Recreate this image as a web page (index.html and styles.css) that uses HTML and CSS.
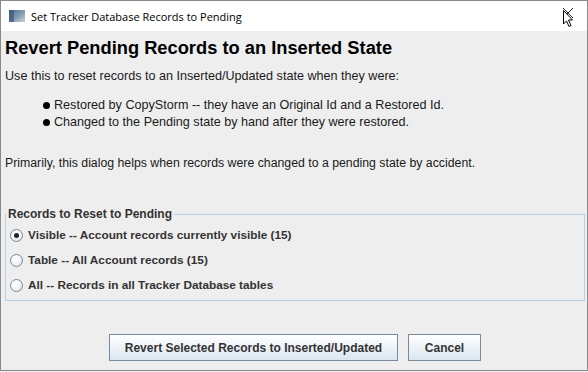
FILE: index.html
```html
<!DOCTYPE html>
<html>
<head>
<meta charset="utf-8">
<link rel="stylesheet" href="styles.css">
</head>
<body>
<div class="window">
  <div class="titlebar">
    <svg class="appicon" width="16" height="12" viewBox="0 0 16 12">
      <defs>
        <linearGradient id="g" x1="0" y1="0" x2="1" y2="1">
          <stop offset="0" stop-color="#4a6a8c"/>
          <stop offset="0.6" stop-color="#8aa2b8"/>
          <stop offset="1" stop-color="#c9d6e0"/>
        </linearGradient>
      </defs>
      <rect x="0" y="0" width="16" height="12" fill="url(#g)"/>
      <rect x="0" y="0" width="5" height="12" fill="#3d5878" opacity="0.7"/>
    </svg>
    <span class="title">Set Tracker Database Records to Pending</span>
    <div class="close">
      <svg width="20" height="24" viewBox="0 0 20 24">
        <path d="M4 3 L14 13 M14 3 L4 13" stroke="#222" stroke-width="1" fill="none"/>
        <path d="M4.5 5.5 L4.5 19 L7.5 16 L10 21.5 L12 20.5 L9.5 15 L13.5 15 Z" fill="#fff" stroke="#000" stroke-width="1" stroke-linejoin="miter"/>
      </svg>
    </div>
  </div>
  <div class="content">
    <h1 class="heading">Revert Pending Records to an Inserted State</h1>
    <p class="intro">Use this to reset records to an Inserted/Updated state when they were:</p>
    <ul class="list">
      <li>Restored by CopyStorm -- they have an Original Id and a Restored Id.</li>
      <li>Changed to the Pending state by hand after they were restored.</li>
    </ul>
    <p class="note">Primarily, this dialog helps when records were changed to a pending state by accident.</p>
    <fieldset class="group">
      <legend class="legend">Records to Reset to Pending</legend>
      <label class="radio"><span class="dot checked"></span>Visible -- Account records currently visible (15)</label>
      <label class="radio"><span class="dot"></span>Table -- All Account records (15)</label>
      <label class="radio"><span class="dot"></span>All -- Records in all Tracker Database tables</label>
    </fieldset>
    <div class="buttons">
      <button class="btn wide">Revert Selected Records to Inserted/Updated</button>
      <button class="btn cancel">Cancel</button>
    </div>
  </div>
</div>
</body>
</html>
```
FILE: styles.css
```css
* { box-sizing: border-box; }
html, body { margin: 0; padding: 0; }
body { width: 588px; height: 372px; overflow: hidden; background: #eeeeee; font-family: "Liberation Sans", Arial, sans-serif; }
.window {
  width: 588px; height: 371px;
  border: 1px solid #8a8a8a;
  background: #eeeeee;
  display: flex; flex-direction: column;
}
.titlebar {
  height: 30px; background: #ffffff;
  display: flex; align-items: center;
  padding-left: 8px;
  position: relative;
}
.appicon { display: block; margin-right: 6px; margin-top: -1px; }
.title { font-family: "Open Sans", "Segoe UI", sans-serif; font-size: 11px; color: #000; }
.close { position: absolute; right: 8px; top: 4px; }
.content { flex: 1; padding: 0 2px 0 4px; color: #1a1a1a; }
.heading { margin: 6px 0 0 0; font-size: 18.3px; font-weight: bold; line-height: 22px; color: #000; }
.intro { margin: 10px 0 0 0; font-size: 12.6px; line-height: 14px; }
.list { margin: 14px 0 0 0; padding: 0 0 0 49px; list-style: none; }
.list li { font-size: 12.6px; line-height: 17px; position: relative; }
.list li::before { content: ""; position: absolute; left: -11px; top: 5px; width: 7px; height: 7px; border-radius: 50%; background: #000; }
.note { margin: 25px 0 0 0; font-size: 12.3px; line-height: 14px; }
.group {
  margin: 37px 0 0 0; padding: 7px 4px 8px 4px;
  border: 1px solid #b8cfe5;
  display: flex; flex-direction: column; gap: 11px;
  min-width: 0;
}
.legend { font-size: 12px; font-weight: bold; padding: 0 2px; margin-left: -4px; color: #333; }
.radio { display: flex; align-items: center; font-size: 11.8px; font-weight: bold; color: #333; line-height: 14px; }
.dot {
  width: 13px; height: 13px; border-radius: 50%;
  border: 1px solid #7d8a96;
  background: radial-gradient(circle at 40% 35%, #ffffff 0%, #f2f5f8 50%, #d0d9e2 100%);
  margin-right: 5px; position: relative;
}
.dot.checked::after { content: ""; position: absolute; left: 3px; top: 3px; width: 5px; height: 5px; border-radius: 50%; background: #222; }
.buttons { display: flex; justify-content: center; gap: 10px; margin-top: 33px; padding-left: 0; }
.btn {
  height: 27px; font-family: "Liberation Sans", Arial, sans-serif; font-size: 12px; font-weight: bold; color: #333;
  border: 1px solid #7a8a99; background: linear-gradient(#ffffff, #dbe6f2);
  padding: 0; white-space: nowrap;
}
.btn.wide { width: 289px; }
.btn.cancel { width: 73px; }
```
